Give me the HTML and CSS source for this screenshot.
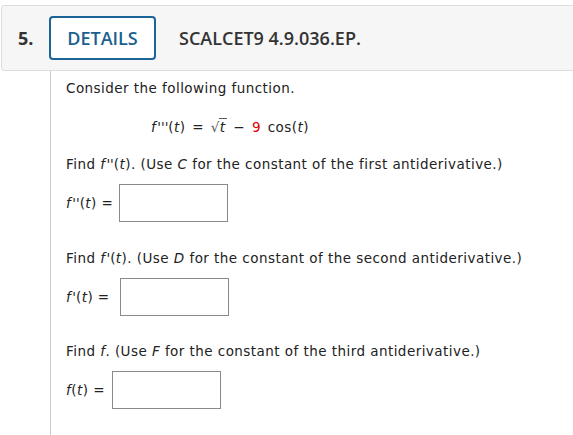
FILE: index.html
```html
<!DOCTYPE html>
<html>
<head>
<meta charset="utf-8">
<link rel="stylesheet" href="styles.css">
</head>
<body>
<div class="question">
  <div class="header">
    <span class="num">5.</span>
    <button class="details">DETAILS</button>
    <span class="code">SCALCET9 4.9.036.EP.</span>
  </div>
  <div class="content">
    <p class="line">Consider the following function.</p>
    <p class="equation"><i class="fn">f</i><span class="pr">'''</span>(<i>t</i>) <span class="op">=</span> <span class="rad">&#8730;</span><span class="radicand"><i>t</i></span> <span class="op">&minus;</span> <span class="red">9</span> cos(<i>t</i>)</p>
    <p class="line find first">Find <i class="fn">f</i><span class="pr">''</span>(<i>t</i>). (Use <i>C</i> for the constant of the first antiderivative.)</p>
    <div class="answer"><span class="label l1"><i class="fn">f</i><span class="pr">''</span>(<i>t</i>) =</span><span class="box"></span></div>
    <p class="line find">Find <i class="fn">f</i><span class="pr">'</span>(<i>t</i>). (Use <i>D</i> for the constant of the second antiderivative.)</p>
    <div class="answer"><span class="label l2"><i class="fn">f</i><span class="pr">'</span>(<i>t</i>) =</span><span class="box"></span></div>
    <p class="line find last">Find <i>f</i>. (Use <i>F</i> for the constant of the third antiderivative.)</p>
    <div class="answer"><span class="label l3"><i>f</i>(<i>t</i>) =</span><span class="box"></span></div>
  </div>
</div>
</body>
</html>
```

FILE: styles.css
```css
html, body {
  margin: 0;
  padding: 0;
  background: #ffffff;
  overflow: hidden;
}
.question {
  width: 573px;
  height: 435px;
  padding-top: 5px;
  box-sizing: border-box;
}
.header {
  margin-left: 1px;
  margin-right: -10px;
  height: 64px;
  background: #f6f6f6;
  border: 1px solid #dddddd;
  border-radius: 3px 0 0 3px;
  display: flex;
  align-items: center;
  font-family: "Open Sans", sans-serif;
}
.num {
  font-size: 18px;
  font-weight: 700;
  color: #333333;
  margin-left: 16px;
  width: 31px;
}
.details {
  font-family: "Open Sans", sans-serif;
  font-size: 18px;
  font-weight: 600;
  color: #1a5f8f;
  background: #ffffff;
  border: 2px solid #1a6496;
  border-radius: 4px;
  width: 107px;
  height: 44px;
  padding: 0;
  margin: 0;
}
.code {
  margin-left: 23px;
  font-size: 18px;
  font-weight: 600;
  color: #333333;
}
.content {
  margin-left: 50px;
  border-left: 1px solid #cccccc;
  height: 370px;
  padding: 8px 0 0 15px;
  font-family: "DejaVu Sans", Verdana, sans-serif;
  font-size: 13.5px;
  letter-spacing: 0.45px;
  color: #222222;
}
p {
  margin: 0;
}
.line {
  line-height: 18px;
}
.fn {
  padding-right: 1px;
}
.pr {
  font-style: italic;
  letter-spacing: 0;
}
.equation {
  line-height: 18px;
  margin-top: 21px;
  margin-left: 85px;
  word-spacing: 2px;
}
.rad {
  color: #555555;
  margin-right: -1px;
}
.radicand {
  border-top: 1px solid #555555;
  padding: 0 1px;
}
.red {
  color: #e00000;
}
.find {
  margin-top: 27px;
}
.find.first {
  margin-top: 19px;
}
.find.last {
  margin-top: 26px;
}
.answer {
  display: flex;
  align-items: center;
  margin-top: 11px;
}
.label {
  margin-right: 7px;
}
.label.l1 {
  margin-right: 6px;
}
.label.l2 {
  margin-right: 10px;
}
.box {
  width: 107px;
  height: 36px;
  border: 1px solid #8a8a8a;
  background: #ffffff;
}
```
